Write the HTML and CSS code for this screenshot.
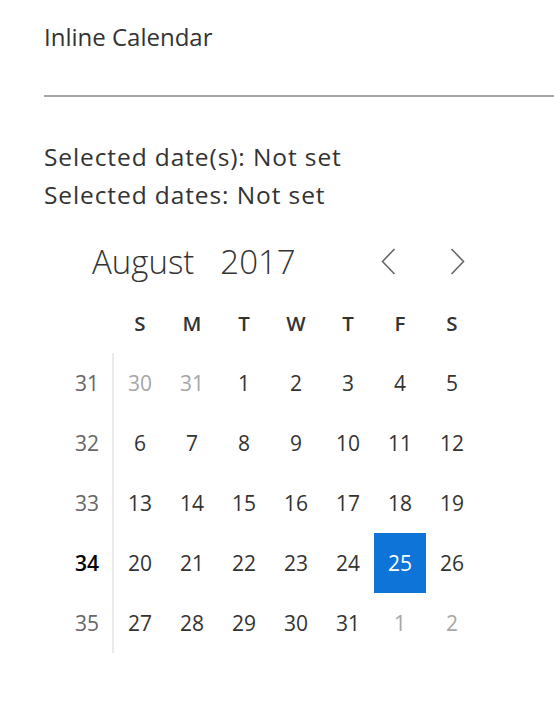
FILE: index.html
```html
<!DOCTYPE html>
<html>
<head>
<meta charset="utf-8">
<link rel="stylesheet" href="styles.css">
</head>
<body>
<div class="page">
  <div class="title">Inline Calendar</div>
  <div class="divider"></div>
  <div class="status">
    <div>Selected date(s): Not set</div>
    <div>Selected dates: Not set</div>
  </div>
  <div class="calendar">
    <div class="cal-header">
      <div class="month-year">
        <span class="month">August</span>
        <span class="year">2017</span>
      </div>
      <div class="nav">
        <button class="nav-btn" aria-label="Previous month">
          <svg width="15" height="27" viewBox="0 0 15 27"><path d="M13.5 1 L1.5 13.5 L13.5 26" fill="none" stroke="#666" stroke-width="1.6"/></svg>
        </button>
        <button class="nav-btn" aria-label="Next month">
          <svg width="15" height="27" viewBox="0 0 15 27"><path d="M1.5 1 L13.5 13.5 L1.5 26" fill="none" stroke="#666" stroke-width="1.6"/></svg>
        </button>
      </div>
    </div>
    <div class="grid">
      <div class="wk-head"></div>
      <div class="dow">S</div><div class="dow">M</div><div class="dow">T</div><div class="dow">W</div><div class="dow">T</div><div class="dow">F</div><div class="dow">S</div>

      <div class="wk">31</div>
      <div class="day out">30</div><div class="day out">31</div><div class="day">1</div><div class="day">2</div><div class="day">3</div><div class="day">4</div><div class="day">5</div>

      <div class="wk">32</div>
      <div class="day">6</div><div class="day">7</div><div class="day">8</div><div class="day">9</div><div class="day">10</div><div class="day">11</div><div class="day">12</div>

      <div class="wk">33</div>
      <div class="day">13</div><div class="day">14</div><div class="day">15</div><div class="day">16</div><div class="day">17</div><div class="day">18</div><div class="day">19</div>

      <div class="wk current">34</div>
      <div class="day">20</div><div class="day">21</div><div class="day">22</div><div class="day">23</div><div class="day">24</div><div class="day selected">25</div><div class="day">26</div>

      <div class="wk">35</div>
      <div class="day">27</div><div class="day">28</div><div class="day">29</div><div class="day">30</div><div class="day">31</div><div class="day out">1</div><div class="day out">2</div>
    </div>
  </div>
</div>
</body>
</html>
```
FILE: styles.css
```css
* { box-sizing: border-box; }
html, body {
  margin: 0;
  padding: 0;
  background: #fff;
}
body {
  font-family: "Segoe UI", "Open Sans", "Noto Sans", sans-serif;
  color: #333;
}
.page {
  padding: 18px 0 0 44px;
}
.title {
  font-size: 24px;
  line-height: 38px;
  color: #333;
}
.divider {
  margin-top: 39px;
  height: 2px;
  background: #a6a6a6;
}
.status {
  margin-top: 41px;
  font-size: 24.5px;
  letter-spacing: 0.9px;
  line-height: 38px;
  color: #333;
}
.calendar {
  margin-top: 19px;
  width: 434px;
  padding-left: 18px;
}
.cal-header {
  display: flex;
  align-items: center;
  justify-content: space-between;
  height: 56px;
  padding-left: 30px;
  padding-right: 12px;
}
.month-year {
  display: flex;
  gap: 26px;
  font-size: 33px;
  font-weight: 300;
  color: #333;
}
.nav {
  display: flex;
  gap: 51px;
}
.nav-btn {
  border: 0;
  background: none;
  padding: 0;
  width: 18px;
  height: 30px;
  display: flex;
  align-items: center;
  justify-content: center;
}
.grid {
  margin-top: 12px;
  display: grid;
  grid-template-columns: repeat(8, 52px);
  grid-template-rows: 52px repeat(5, 60px);
}
.grid > div {
  display: flex;
  align-items: center;
  justify-content: center;
}
.dow {
  font-size: 20.5px;
  font-weight: 600;
  color: #333;
  padding-bottom: 8px;
}
.wk {
  font-size: 21px;
  color: #666;
  border-right: 2px solid #eaeaea;
}
.wk.current {
  color: #000;
  font-weight: 600;
}
.day {
  font-size: 21px;
  color: #333;
}
.day.out {
  color: #a6a6a6;
}
.day.selected {
  background: #0f74d7;
  color: #fff;
}
```
